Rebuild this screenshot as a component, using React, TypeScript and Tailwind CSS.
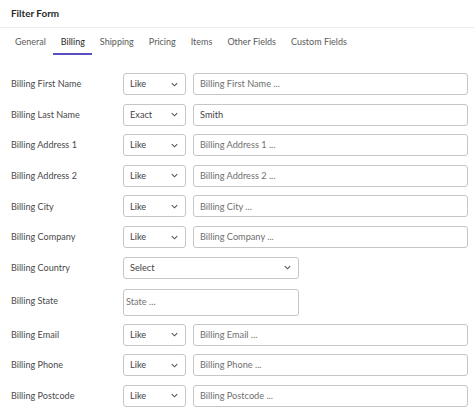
import React from "react";

const Chevron = () => (
  <svg width="9" height="9" viewBox="0 0 10 10" className="shrink-0">
    <path d="M2 3.5 L5 6.5 L8 3.5" fill="none" stroke="#555" strokeWidth="1.2" />
  </svg>
);

const OpSelect = ({ value }: { value: string }) => (
  <div className="flex h-[22px] w-[63px] shrink-0 items-center justify-between rounded-[3px] border border-[#c6c6c6] pl-[6px] pr-[6px] text-[9.2px] text-[#444]">
    <span>{value}</span>
    <Chevron />
  </div>
);

const TextInput = ({ value, placeholder }: { value?: string; placeholder?: string }) => (
  <div className="ml-[7px] flex h-[22px] flex-1 items-center rounded-[3px] border border-[#c6c6c6] px-[6px] text-[9.2px]">
    {value ? <span className="text-[#444]">{value}</span> : <span className="text-[#707070]">{placeholder}</span>}
  </div>
);

const Row = ({ label, children, tall }: { label: string; children: React.ReactNode; tall?: boolean }) => (
  <div className={`flex items-center ${tall ? "h-[36.5px]" : "h-[30.6px]"}`}>
    <div className="w-[123px] shrink-0 pl-[11px] text-[9.1px] text-[#4a4a4a]">{label}</div>
    <div className="flex flex-1 items-center pr-[6px]">{children}</div>
  </div>
);

const tabs = ["General", "Billing", "Shipping", "Pricing", "Items", "Other Fields", "Custom Fields"];

const rows: [string, string, string, string?][] = [
  ["Billing First Name", "Like", "Billing First Name ..."],
  ["Billing Last Name", "Exact", "", "Smith"],
  ["Billing Address 1", "Like", "Billing Address 1 ..."],
  ["Billing Address 2", "Like", "Billing Address 2 ..."],
  ["Billing City", "Like", "Billing City ..."],
  ["Billing Company", "Like", "Billing Company ..."],
];

const rows2: [string, string, string][] = [
  ["Billing Email", "Like", "Billing Email ..."],
  ["Billing Phone", "Like", "Billing Phone ..."],
  ["Billing Postcode", "Like", "Billing Postcode ..."],
];

export default function App() {
  return (
    <div className="h-[415px] w-[474px] overflow-hidden bg-white" style={{ fontFamily: 'Lato, "Noto Sans", sans-serif' }}>
      <div className="flex h-[28px] items-center border-b border-[#ececec] pl-[11px] text-[9.9px] font-bold text-[#2a2a2a]">
        Filter Form
      </div>
      <div className="flex h-[27px] items-stretch pl-[7.5px]">
        {tabs.map((t) => (
          <div
            key={t}
            className={`flex items-center px-[7.5px] pt-[2px] text-[9px] ${
              t === "Billing" ? "border-b-2 border-[#5a4fc0] text-[#2a2a2a]" : "border-b-2 border-transparent text-[#5a5a5a]"
            }`}
          >
            {t}
          </div>
        ))}
      </div>
      <div className="h-[13.75px]" />
      {rows.map(([l, op, ph, val]) => (
        <Row key={l} label={l}>
          <OpSelect value={op} />
          <TextInput placeholder={ph} value={val} />
        </Row>
      ))}
      <Row label="Billing Country">
        <div className="flex h-[22px] w-[176px] items-center justify-between rounded-[3px] border border-[#c6c6c6] px-[6px] text-[9.2px] text-[#444]">
          <span>Select</span>
          <Chevron />
        </div>
      </Row>
      <Row label="Billing State" tall>
        <div className="mt-[2px] flex h-[27px] w-[176px] items-center rounded-[3px] border border-[#c6c6c6] px-[2px] text-[9.2px] text-[#707070]">
          State ...
        </div>
      </Row>
      {rows2.map(([l, op, ph]) => (
        <Row key={l} label={l}>
          <OpSelect value={op} />
          <TextInput placeholder={ph} />
        </Row>
      ))}
    </div>
  );
}
